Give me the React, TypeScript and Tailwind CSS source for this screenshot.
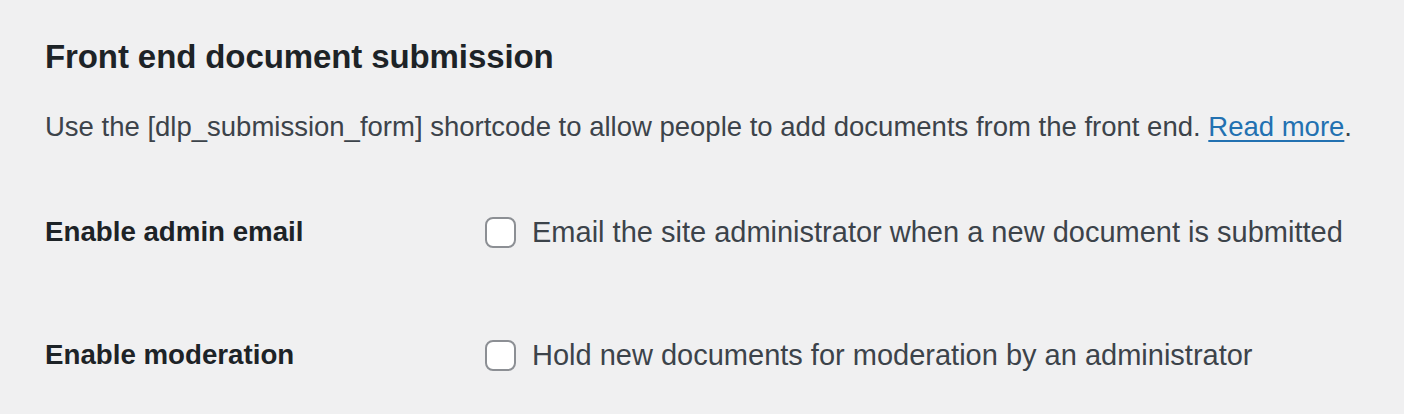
export default function App() {
  const rows = [
    { label: "Enable admin email", text: "Email the site administrator when a new document is submitted" },
    { label: "Enable moderation", text: "Hold new documents for moderation by an administrator" },
  ]

  return (
    <div className="min-h-[414px] w-full bg-[#f0f0f1] px-[45px] pt-[37px] font-['Liberation_Sans',Arial,sans-serif] text-[#1d2327]">
      <h2 className="whitespace-nowrap text-[33px] font-bold leading-[40px] tracking-[-0.1px]">Front end document submission</h2>
      <p className="mt-[30px] whitespace-nowrap text-[27.5px] leading-[40px] text-[#3c434a]">
        Use the [dlp_submission_form] shortcode to allow people to add documents from the front end.{" "}
        <a href="#" className="text-[#2271b1] underline underline-offset-[4px] decoration-[2px]">
          Read more
        </a>
        .
      </p>
      <div className="mt-[65px] flex flex-col gap-[83px]">
        {rows.map((row) => (
          <div key={row.label} className="flex items-center">
            <div className="w-[440px] shrink-0 whitespace-nowrap text-[27.7px] font-bold leading-[40px]">{row.label}</div>
            <label className="flex items-center gap-[16px] whitespace-nowrap text-[29px] leading-[40px] text-[#3c434a]">
              <span className="block h-[31px] w-[31px] shrink-0 rounded-[8px] border-2 border-[#8c8f94] bg-white" />
              {row.text}
            </label>
          </div>
        ))}
      </div>
    </div>
  )
}
